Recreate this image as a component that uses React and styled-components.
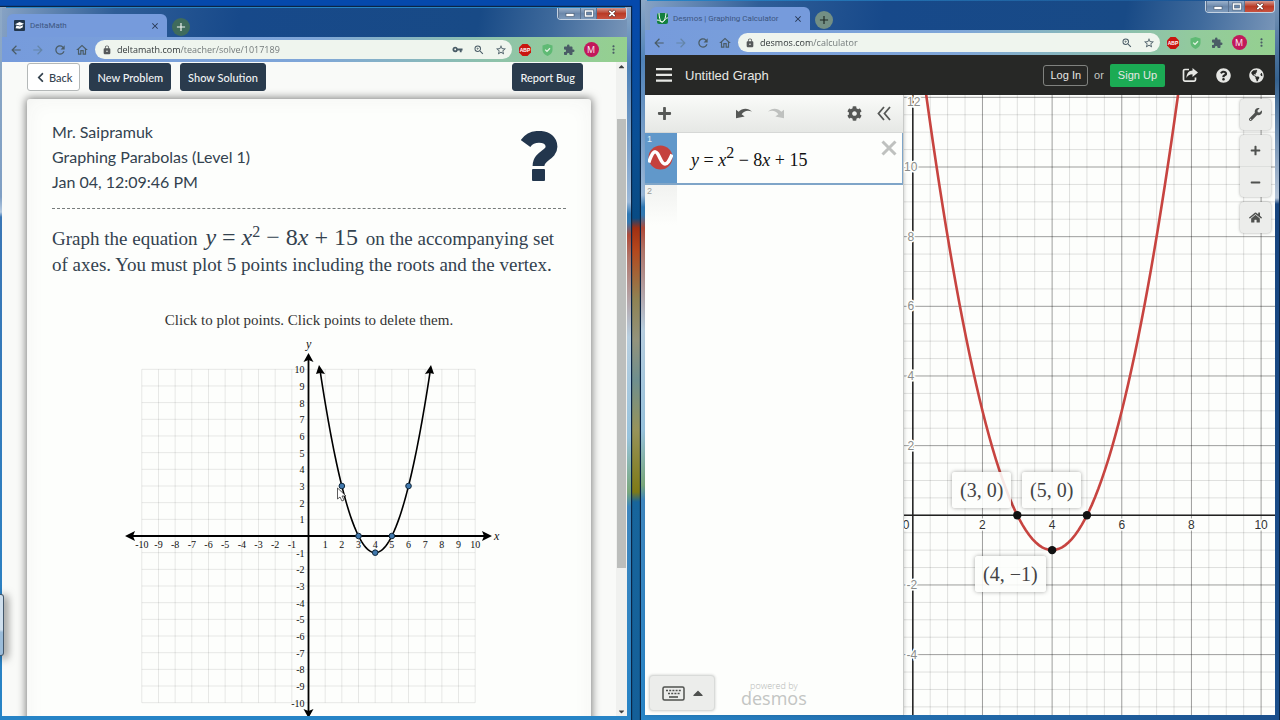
import styled, { createGlobalStyle } from "styled-components";
import {
  MdArrowBack,
  MdArrowForward,
  MdRefresh,
  MdOutlineHome,
  MdLock,
  MdVpnKey,
  MdZoomIn,
  MdStarBorder,
  MdExtension,
  MdMoreVert,
  MdClose,
  MdAdd,
} from "react-icons/md";
import {
  FaChevronLeft,
  FaQuestionCircle,
  FaGlobeAmericas,
  FaWrench,
  FaHome,
  FaCog,
  FaPlus,
  FaMinus,
  FaCaretUp,
  FaCaretDown,
} from "react-icons/fa";

const SANS = `"Liberation Sans", Arial, sans-serif`;
const UI = `"Open Sans", "Noto Sans", sans-serif`;
const SERIF = `"Liberation Serif", Georgia, serif`;

const GlobalStyle = createGlobalStyle`
  * {
    box-sizing: border-box;
  }
  body {
    margin: 0;
    overflow: hidden;
    font-family: ${SANS};
  }
  button {
    margin: 0;
    padding: 0;
    border: none;
    background: none;
    color: inherit;
    font: inherit;
    display: flex;
    align-items: center;
    justify-content: center;
  }
  h1, p {
    margin: 0;
    font-weight: 400;
  }
`;

/* ---------- desktop and window frame ---------- */

const Desktop = styled.main`
  position: relative;
  display: grid;
  grid-template-columns: 631fr 638fr;
  gap: 10px;
  height: 100vh;
  padding-right: 1px;
  background: linear-gradient(
    180deg,
    #0549ac 0,
    #0549ac 10px,
    #0a4f94 140px,
    #084b84 218px,
    #a12f12 228px,
    #b4471c 250px,
    #8f8354 300px,
    #93937c 340px,
    #6f8f8e 380px,
    #97935a 430px,
    #7f7a16 492px,
    #17659c 502px,
    #145f98 720px
  );
`;

/* glass edges: what shows through depends on the wallpaper behind each side */
const EDGE_PLAIN = "linear-gradient(#8ea9c6, #7f9fc4 190px, #b5cbe2 205px, #3a76b5 210px, #2784c6)";
const EDGE_DARK = "linear-gradient(#7895b8, #35628f 80px, #8da6c2 160px, #b3c3d6 198px, #17457f 204px, #1b4f8c)";
const EDGE_WALLPAPER = `linear-gradient(
  #8ea9c6 0, #4f82b8 60px, #9bb8d8 195px, #2f78b4 207px, #3379b2 215px, #b04a38 228px,
  #b07468 250px, #b8cfe0 330px, #98c3dd 430px, #79a77b 485px, #3e86be 500px, #2784c6 100%)`;

const Window = styled.section`
  display: flex;
  flex-direction: column;
  min-width: 0;
  min-height: 0;
  margin-top: ${(props) => props.$top}px;
  padding: 1px 4px ${(props) => props.$bottom}px ${(props) => props.$left}px;
  background:
    ${(props) => props.$edges[0]} left / 6px 100% no-repeat,
    ${(props) => props.$edges[1]} right / 6px 100% no-repeat,
    linear-gradient(90deg, #2784c6, ${(props) => props.$base});
  box-shadow: 0 0 1px 1px #0b2545;
`;

const TitleBar = styled.header`
  display: flex;
  align-items: flex-start;
  flex: none;
  height: 29px;
  padding-left: 5px;
  background: linear-gradient(
    100deg,
    #86a2c4 0,
    #2f5e98 18%,
    #17498a 38%,
    #184a86 76%,
    #3f6a9c 88%,
    #7895b8 100%
  );
`;

const Tab = styled.div`
  display: flex;
  align-items: center;
  gap: 5px;
  width: 160px;
  height: 23px;
  margin-top: 6px;
  padding: 0 7px;
  border-radius: 6px 6px 0 0;
  background: #769bdc;
  color: #3d5680;
  font: 8px Roboto, sans-serif;

  & span {
    flex: 1;
    white-space: nowrap;
  }
`;

const TabClose = styled.button`
  color: #24344f;
  font-size: 10px;
`;

const NewTab = styled.button`
  width: 18px;
  height: 18px;
  margin: 10px 0 0 5px;
  border-radius: 50%;
  background: ${(props) => props.$color};
  color: ${(props) => props.$ink};
  font-size: 14px;
`;

const WindowButtons = styled.div`
  display: flex;
  height: 12px;
  margin-left: auto;
  border: 1px solid #c4d2e2;
  border-top: none;
  border-radius: 0 0 4px 4px;
  overflow: hidden;
`;

const WindowButton = styled.button`
  width: ${(props) => props.$width}px;
  border-left: 1px solid #5b7290;
  background: ${(props) =>
    props.$close
      ? "linear-gradient(#d59a90, #b93a25 50%, #c85240)"
      : "linear-gradient(#9cb2cc, #6b88ab 50%, #7d9abb)"};
`;

const Toolbar = styled.nav`
  display: flex;
  align-items: center;
  flex: none;
  height: 25px;
  padding: 0 3px;
  background: linear-gradient(90deg, #769bdc 0, #7fa6d8 50%, #93cb9c 88%, #95d08f 100%);
`;

const ToolButton = styled.button`
  width: 22px;
  height: 22px;
  font-size: ${(props) => props.$size || 14}px;
  color: ${(props) => props.$color || "#4a5c66"};
`;

const Omnibox = styled.label`
  display: flex;
  align-items: center;
  flex: 1;
  min-width: 0;
  height: 19px;
  margin: 0 2px;
  padding: 0 0 0 7px;
  border-radius: 10px;
  background: #eff5ee;
  color: #55595a;
  font-size: 10px;
`;

const Address = styled.input`
  flex: 1;
  min-width: 0;
  margin-left: 5px;
  padding: 0;
  border: none;
  outline: none;
  font: 9px ${UI};
  color: transparent;
  background: linear-gradient(
    90deg,
    #2b3133 ${(props) => props.$host}px,
    #6c7374 ${(props) => props.$host}px
  );
  background-clip: text;
  -webkit-background-clip: text;
`;

const Avatar = styled.span`
  display: grid;
  place-items: center;
  width: 15px;
  height: 15px;
  border-radius: 50%;
  background: #c2185b;
  color: #fbe9f0;
  font: 9px ${UI};
`;

function MinimizeIcon() {
  return (
    <svg width="10" height="9" viewBox="0 0 10 9">
      <rect x="1" y="4.500" width="8" height="3" fill="#fff" stroke="#41546b" strokeWidth=".6" />
    </svg>
  );
}

function MaximizeIcon() {
  return (
    <svg width="10" height="9" viewBox="0 0 10 9">
      <rect x="1.500" y="2" width="7" height="5" fill="none" stroke="#41546b" strokeWidth="2.600" />
      <rect x="1.500" y="2" width="7" height="5" fill="none" stroke="#fff" strokeWidth="1.500" />
    </svg>
  );
}

function CloseIcon() {
  return (
    <svg width="10" height="9" viewBox="0 0 10 9">
      <path d="M2 1.500 8 7.500M8 1.500 2 7.500" stroke="#5c2a24" strokeWidth="3" />
      <path d="M2.300 1.800 7.700 7.200M7.700 1.800 2.300 7.200" stroke="#fff" strokeWidth="1.800" />
    </svg>
  );
}

function AbpIcon() {
  return (
    <svg width="12" height="12" viewBox="0 0 12 12">
      <path d="M3.500 0h5L12 3.500v5L8.500 12h-5L0 8.500v-5z" fill="#c9150f" />
      <text
        x="6"
        y="8"
        textAnchor="middle"
        fontFamily="Liberation Sans"
        fontWeight="700"
        fontSize="5"
        fill="#fff"
      >
        ABP
      </text>
    </svg>
  );
}

function ShieldIcon() {
  return (
    <svg width="11" height="12" viewBox="0 0 11 12">
      <path d="M5.500 0 10.500 1.500v4.500c0 3-2.500 5-5 6-2.500-1-5-3-5-6V1.500z" fill="#5fba74" />
      <path d="m3.200 5.600 1.800 1.800 3-3.200" fill="none" stroke="#e4f6e4" strokeWidth="1.300" />
    </svg>
  );
}

function DeltaFavicon() {
  return (
    <svg width="11" height="11" viewBox="0 0 11 11">
      <rect width="11" height="11" rx="1" fill="#22364d" />
      <path d="M5.500 2 10 3.800 6 5.700 1 4.300z" fill="#fff" />
      <path d="M2.500 5.500 6 6.600 8.800 5.300v2L6 8.700 1.500 8.300z" fill="#fff" />
    </svg>
  );
}

function DesmosFavicon() {
  return (
    <svg width="11" height="11" viewBox="0 0 11 11">
      <rect width="11" height="11" rx="2" fill="#12803f" />
      <path d="M2 0c.5 12 6 12 7 0M0 7c3 0 3 2 5 2s4-5 6-4" fill="none" stroke="#fff" strokeWidth="1" />
    </svg>
  );
}

function BrowserWindow({ frame, title, favicon, url, host, saved, plus, children }) {
  return (
    <Window
      $top={frame.top}
      $left={frame.left}
      $bottom={frame.bottom}
      $edges={frame.edges}
      $base={frame.base}
    >
      <TitleBar>
        <Tab>
          {favicon}
          <span>{title}</span>
          <TabClose aria-label="Close tab">
            <MdClose />
          </TabClose>
        </Tab>
        <NewTab aria-label="New tab" $color={plus.color} $ink={plus.ink}>
          <MdAdd />
        </NewTab>
        <WindowButtons>
          <WindowButton aria-label="Minimize" $width={22}>
            <MinimizeIcon />
          </WindowButton>
          <WindowButton aria-label="Maximize" $width={16}>
            <MaximizeIcon />
          </WindowButton>
          <WindowButton aria-label="Close" $width={30} $close>
            <CloseIcon />
          </WindowButton>
        </WindowButtons>
      </TitleBar>
      <Toolbar>
        <ToolButton aria-label="Back"><MdArrowBack /></ToolButton>
        <ToolButton aria-label="Forward" $color="#6485a8"><MdArrowForward /></ToolButton>
        <ToolButton aria-label="Reload"><MdRefresh /></ToolButton>
        <ToolButton aria-label="Home"><MdOutlineHome /></ToolButton>
        <Omnibox>
          <MdLock />
          <Address aria-label="Address" defaultValue={url} $host={host} />
          {saved && <ToolButton aria-label="Passwords" $size={11}><MdVpnKey /></ToolButton>}
          <ToolButton aria-label="Zoom" $size={12}><MdZoomIn /></ToolButton>
          <ToolButton aria-label="Bookmark" $size={12}><MdStarBorder /></ToolButton>
        </Omnibox>
        <ToolButton aria-label="Adblock Plus"><AbpIcon /></ToolButton>
        <ToolButton aria-label="Protection"><ShieldIcon /></ToolButton>
        <ToolButton aria-label="Extensions" $size={12}><MdExtension /></ToolButton>
        <ToolButton aria-label="Profile"><Avatar>M</Avatar></ToolButton>
        <ToolButton aria-label="Menu" $size={13}><MdMoreVert /></ToolButton>
      </Toolbar>
      {children}
    </Window>
  );
}

/* ---------- DeltaMath page ---------- */

const Viewport = styled.div`
  display: flex;
  flex: 1;
  min-height: 0;
  background: #f9faf8;
`;

const Page = styled.div`
  flex: 1;
  min-width: 0;
  overflow: hidden;
  padding: 1px 25px 0;
`;

const Actions = styled.div`
  display: flex;
  gap: 9px;
  padding-right: 8px;
`;

const ActionButton = styled.button`
  height: 28px;
  padding: 0 7px;
  gap: 3px;
  border: 1px solid ${(props) => (props.$plain ? "#b4b8b8" : "#2a3b4d")};
  border-radius: 3px;
  background: ${(props) => (props.$plain ? "#fff" : "#2a3b4d")};
  color: ${(props) => (props.$plain ? "#35434f" : "#f1f4f5")};
  font: 500 11px Lato, sans-serif;
  white-space: nowrap;

  &:last-child {
    margin-left: auto;
  }
`;

const Card = styled.article`
  height: 700px;
  margin-top: 8px;
  padding: 20px 25px 0;
  border-radius: 3px;
  background: #fdfefc;
  box-shadow: 0 0 9px 1px rgba(0, 0, 0, 0.5), inset 0 0 20px rgba(60, 60, 50, 0.05);
  color: #33424f;
`;

const CardHeader = styled.header`
  display: flex;
  justify-content: space-between;
  padding-bottom: 14px;
  border-bottom: 1px dashed #777c7c;
  font: 300 16px/25px Lato, sans-serif;

  & > svg {
    margin: 12px 8px 0 0;
  }
`;

const Question = styled.p`
  margin-top: 17px;
  font: 19px/26px ${SERIF};
`;

const MathText = styled.span`
  margin: 0 ${(props) => props.$gap || 0}px;
  font-family: ${SERIF};
  font-size: ${(props) => props.$size}px;
  line-height: 20px;
  white-space: nowrap;

  & sup {
    font-size: ${(props) => props.$sup}px;
    line-height: 0;
    vertical-align: 8px;
  }
`;

const Hint = styled.p`
  margin: 32px 0 5px;
  text-align: center;
  color: #333;
  font: 15px/20px ${SERIF};
`;

const Plot = styled.svg`
  display: block;
  margin: 0 auto;
  font: 10px ${SERIF};
`;

const Scrollbar = styled.div`
  display: grid;
  grid-template-rows: 57px 449fr 148fr;
  justify-items: center;
  width: 11px;
  background: #f0f1ef;
  color: #3c3f40;
  font-size: 9px;

  & svg:last-child {
    align-self: end;
  }
`;

const Thumb = styled.div`
  width: 9px;
  background: #bcbebc;
`;

const parabola = (x) => x * x - 8 * x + 15;

function curvePoints(from, to, origin, unit) {
  const points = [];
  for (let i = 0; i <= 80; i++) {
    const x = from + ((to - from) * i) / 80;
    points.push(`${(origin.x + x * unit).toFixed(2)},${(origin.y - parabola(x) * unit).toFixed(2)}`);
  }
  return points.join(" ");
}

const TICKS = Array.from({ length: 21 }, (_, i) => i - 10);
const PLOTTED = [2, 3, 4, 5, 6];

function DeltaGraph() {
  const u = 16.67;
  const o = { x: 199.5, y: 201 };
  const px = (x) => o.x + x * u;
  const py = (y) => o.y - y * u;
  return (
    <Plot width="400" height="400" viewBox="0 0 400 400">
      <g stroke="#000" strokeOpacity=".09">
        {TICKS.map((t) => (
          <g key={t}>
            <line x1={px(t)} x2={px(t)} y1={py(10)} y2={py(-10)} />
            <line x1={px(-10)} x2={px(10)} y1={py(t)} y2={py(t)} />
          </g>
        ))}
      </g>
      <g stroke="#000" strokeWidth="1.800">
        <line x1="20" x2="378" y1={o.y} y2={o.y} />
        <line x1={o.x} x2={o.x} y1="24" y2="376" />
      </g>
      <path d="M16 201l10-5-2 5 2 5zM383 201l-10-5 2 5-2 5z" />
      <path d="M199.500 18l-5 9 5-2 5 2zM199.500 383l-5-9 5 2 5-2z" />
      <g fill="#111">
        {TICKS.filter((t) => t !== 0).map((t) => (
          <g key={t}>
            <text x={px(t)} y={o.y + 12} textAnchor="middle">{t}</text>
            <text x={o.x - 4} y={py(t) + 4} textAnchor="end">{t}</text>
          </g>
        ))}
      </g>
      <g fontSize="12" fontStyle="italic" fill="#111">
        <text x="197" y="13">y</text>
        <text x="385" y="205">x</text>
      </g>
      <polyline
        points={curvePoints(0.7, 7.3, o, u)}
        fill="none"
        stroke="#000"
        strokeWidth="1.600"
      />
      <path d="M210 30l-3 9 4-1 5 1zM322 30l3 9-4-1-5 1z" />
      {PLOTTED.map((x) => (
        <circle key={x} cx={px(x)} cy={py(parabola(x))} r="2.800" fill="#4078ad" stroke="#10283c" />
      ))}
      <path
        d="M228.500 153v11l2.500-2 2 4 2-1-2-4h4z"
        fill="#fff"
        stroke="#333"
        strokeWidth=".8"
      />
    </Plot>
  );
}

function Equation({ size, sup, gap }) {
  return (
    <MathText $size={size} $sup={sup} $gap={gap}>
      <i>y</i> = <i>x</i>
      <sup>2</sup> − 8<i>x</i> + 15
    </MathText>
  );
}

function DeltaMath() {
  return (
    <Viewport>
      <Page>
        <Actions>
          <ActionButton $plain>
            <FaChevronLeft /> Back
          </ActionButton>
          <ActionButton>New Problem</ActionButton>
          <ActionButton>Show Solution</ActionButton>
          <ActionButton>Report Bug</ActionButton>
        </Actions>
        <Card>
          <CardHeader>
            <div>
              <p>Mr. Saipramuk</p>
              <p>Graphing Parabolas (Level 1)</p>
              <p>Jan 04, 12:09:46 PM</p>
            </div>
            <svg width="37" height="51" viewBox="0 0 37 51">
              <path
                d="M4.500 12.500C8 7.500 12.500 5.800 18 5.800c8 0 12.500 4 12.500 10 0 8.500-13 8.700-13 19.200"
                fill="none"
                stroke="#22364d"
                strokeWidth="11.800"
              />
              <rect x="11" y="38" width="13" height="12" rx="1" fill="#22364d" />
            </svg>
          </CardHeader>
          <Question>
            Graph the equation <Equation size={24} sup={16} gap={3} /> on the accompanying set of
            axes. You must plot 5 points including the roots and the vertex.
          </Question>
          <Hint>Click to plot points. Click points to delete them.</Hint>
          <DeltaGraph />
        </Card>
      </Page>
      <Scrollbar>
        <FaCaretUp />
        <Thumb />
        <FaCaretDown />
      </Scrollbar>
    </Viewport>
  );
}

/* ---------- Desmos page ---------- */

const DesmosHeader = styled.header`
  display: flex;
  align-items: center;
  flex: none;
  height: 40px;
  padding: 0 11px;
  background: #272826;
  color: #e6e7e4;
  font-size: 11px;

  & h1 {
    margin: 0 auto 0 13px;
    font-size: 13px;
  }
`;

const HeaderIcon = styled.button`
  width: 16px;
  margin-left: ${(props) => props.$gap || 0}px;
  font-size: 15px;
`;

const LogIn = styled.button`
  height: 21px;
  padding: 0 6px;
  border: 1px solid #80827f;
  border-radius: 3px;
`;

const Or = styled.span`
  margin: 0 6px;
  color: #c5c7c4;
`;

const SignUp = styled.button`
  height: 23px;
  padding: 0 8px;
  border-radius: 2px;
  background: #1bab54;
`;

const Calculator = styled.div`
  display: grid;
  grid-template-columns: 259fr 371fr;
  flex: 1;
  min-height: 0;
  background: #fdfefc;
`;

const Panel = styled.div`
  display: flex;
  flex-direction: column;
  min-width: 0;
  border-right: 1px solid #c9cbc9;
  box-shadow: 1px 0 3px rgba(0, 0, 0, 0.15);
`;

const PanelBar = styled.div`
  display: flex;
  align-items: center;
  flex: none;
  height: 38px;
  padding: 0 11px;
  background: linear-gradient(#fafbf9, #e6e8e5);
  border-bottom: 1px solid #d6d8d6;
  font-size: 15px;
`;

const BarButton = styled.button`
  width: 16px;
  margin-left: ${(props) => (props.$push ? "auto" : `${props.$gap || 0}px`)};
  color: ${(props) => (props.$faded ? "#bfc1bf" : "#565856")};
`;

const Expression = styled.div`
  display: flex;
  height: 52px;
  border: solid #7fa5c8;
  border-width: 0 1px 2px 0;
`;

const ExpressionTab = styled.div`
  width: 32px;
  padding: 1px 2px;
  background: ${(props) => (props.$active ? "#6198ca" : "linear-gradient(#f1f2f0, #fdfefc)")};
  color: ${(props) => (props.$active ? "#e3edf6" : "#9b9d9b")};
  font-size: 9px;

  & svg {
    display: block;
    margin: 1px 0 0 1px;
  }
`;

const Formula = styled.div`
  flex: 1;
  padding: 17px 0 0 14px;
  color: #111;
  line-height: 20px;
`;

const DeleteButton = styled.button`
  align-self: flex-start;
  margin: 7px 5px 0 0;
`;

const NextExpression = styled.div`
  display: flex;
  height: 40px;
`;

const PanelFooter = styled.footer`
  display: flex;
  align-items: center;
  gap: 26px;
  margin-top: auto;
  padding: 0 0 4px 4px;
`;

const KeypadButton = styled.button`
  width: 66px;
  height: 36px;
  gap: 5px;
  padding-left: 3px;
  border: 1px solid #d9dbd9;
  border-radius: 4px;
  background: #ecedeb;
  box-shadow: 0 0 3px rgba(0, 0, 0, 0.2);
  color: #4f514f;
  font-size: 16px;
`;

const PoweredBy = styled.p`
  color: #b4b6b4;
  text-align: center;
  font: 300 9px/10px ${UI};

  & b {
    display: block;
    color: #c3c5c3;
    font: 400 18px/14px ${UI};
  }
`;

const GraphPaper = styled.div`
  position: relative;
  min-width: 0;
  overflow: hidden;

  & > svg {
    display: block;
    width: 100%;
    height: 100%;
    font: 12px ${SANS};
  }
`;

const PointLabel = styled.output`
  position: absolute;
  left: ${(props) => props.$x}px;
  top: ${(props) => props.$y}px;
  padding: 0 8px;
  border-radius: 3px;
  background: rgba(253, 254, 252, 0.88);
  box-shadow: 0 0 4px rgba(0, 0, 0, 0.35);
  color: #444;
  font: 20px/36px ${SERIF};
`;

const GraphControls = styled.div`
  position: absolute;
  top: 4px;
  right: 4px;
  display: flex;
  flex-direction: column;
  gap: 5px;
`;

const ControlGroup = styled.div`
  border-radius: 4px;
  background: #ecedeb;
  box-shadow: 0 0 3px rgba(0, 0, 0, 0.35);
`;

const ControlButton = styled.button`
  width: 31px;
  height: 31px;
  color: #4f514f;
  font-size: ${(props) => props.$size || 13}px;

  & + & {
    border-top: 1px solid #dddfdd;
  }
`;

const GRAPH = { x: 8.8, y: 420.3 };
const GRAPH_UNIT = 34.83;
const gx = (x) => GRAPH.x + x * GRAPH_UNIT;
const gy = (y) => GRAPH.y - y * GRAPH_UNIT;

function DesmosGraph() {
  const halves = Array.from({ length: 80 }, (_, i) => (i - 16) / 2);
  return (
    <svg>
      {halves.map((t) => (
        <g key={t} stroke="#000" strokeOpacity={t % 2 === 0 ? 0.38 : 0.12}>
          <line x1={gx(t)} x2={gx(t)} y1="0" y2="100%" />
          <line x1="0" x2="100%" y1={gy(t - 10)} y2={gy(t - 10)} />
        </g>
      ))}
      <line x1={gx(0)} x2={gx(0)} y1="0" y2="100%" stroke="#222" strokeWidth="1.500" />
      <line x1="0" x2="100%" y1={gy(0)} y2={gy(0)} stroke="#222" strokeWidth="1.500" />
      <g textAnchor="middle" stroke="#fdfefc" strokeWidth="3" paintOrder="stroke">
        <g fill="#333">
          <text x="2" y={gy(0) + 14}>0</text>
          {[2, 4, 6, 8, 10].map((t) => (
            <text key={t} x={gx(t)} y={gy(0) + 14}>{t}</text>
          ))}
        </g>
        <g fill="#8b8d8b">
          <text x={gx(0) + 1} y="11">12</text>
          {[10, 8, 6, 4, 2, -2, -4].map((t) => (
            <text key={t} x={gx(0) - (t < 0 ? 1 : 2)} y={gy(t) + 4}>{t}</text>
          ))}
        </g>
      </g>
      <polyline
        points={curvePoints(0.2, 7.8, GRAPH, GRAPH_UNIT)}
        fill="none"
        stroke="#c74440"
        strokeWidth="2.600"
      />
      {[3, 4, 5].map((x) => (
        <circle key={x} cx={gx(x)} cy={gy(parabola(x))} r="4.200" fill="#111" />
      ))}
    </svg>
  );
}

function Desmos() {
  return (
    <>
      <DesmosHeader>
        <HeaderIcon aria-label="Open menu">
          <svg width="16" height="14" viewBox="0 0 16 14" fill="#e6e7e4">
            <path d="M0 0h16v2.200H0zM0 5.800h16V8H0zM0 11.500h16v2.200H0z" />
          </svg>
        </HeaderIcon>
        <h1>Untitled Graph</h1>
        <LogIn>Log In</LogIn>
        <Or>or</Or>
        <SignUp>Sign Up</SignUp>
        <HeaderIcon aria-label="Share" $gap={17}>
          <svg width="16" height="16" viewBox="0 0 16 16">
            <path
              d="M7 2.500H2.800A1.300 1.300 0 0 0 1.500 3.800v9A1.300 1.300 0 0 0 2.800 14.100h9.400a1.300 1.300 0 0 0 1.300-1.300V10.500"
              fill="none"
              stroke="#e6e7e4"
              strokeWidth="1.700"
            />
            <path d="M10.500 1 16 5.500 10.500 10V7.200C7.500 7.200 5.800 8.300 4.500 11c0-4.500 2.200-7.200 6-7.400z" fill="#e6e7e4" />
          </svg>
        </HeaderIcon>
        <HeaderIcon aria-label="Help" $gap={17}><FaQuestionCircle /></HeaderIcon>
        <HeaderIcon aria-label="Language" $gap={17}><FaGlobeAmericas /></HeaderIcon>
      </DesmosHeader>
      <Calculator>
        <Panel>
          <PanelBar>
            <BarButton aria-label="Add item"><FaPlus /></BarButton>
            <BarButton aria-label="Undo" $gap={64}>
              <svg width="17" height="11" viewBox="0 0 17 11" fill="currentColor">
                <path d="M0 1.500 2.800 3.700C6.500-.5 13-.8 17 3.500 12.500 1.500 8.500 2.500 6 6.300L9.200 8.800 0 10.500z" />
              </svg>
            </BarButton>
            <BarButton aria-label="Redo" $gap={16} $faded>
              <svg width="17" height="11" viewBox="0 0 17 11" fill="currentColor">
                <path d="M17 1.500 14.200 3.700C10.500-.5 4-.8 0 3.500 4.500 1.500 8.500 2.500 11 6.300L7.800 8.800 17 10.500z" />
              </svg>
            </BarButton>
            <BarButton aria-label="Edit list" $push><FaCog /></BarButton>
            <BarButton aria-label="Hide list" $gap={14}>
              <svg width="14" height="15" viewBox="0 0 14 15">
                <path d="M7 1 1.500 7.500 7 14M13 1 7.500 7.500 13 14" fill="none" stroke="#565856" strokeWidth="1.800" />
              </svg>
            </BarButton>
          </PanelBar>
          <Expression>
            <ExpressionTab $active>
              1
              <svg width="25" height="25" viewBox="0 0 25 25">
                <circle cx="12.500" cy="12.500" r="12" fill="#c5413d" />
                <path
                  d="M.8 17.500C4 8 6.500 4.500 9.500 8.500c2.500 3.500 4 10.500 7.500 10.500 3 0 4.500-4 7-9.500"
                  fill="none"
                  stroke="#fff"
                  strokeWidth="3.500"
                />
              </svg>
            </ExpressionTab>
            <Formula role="textbox" aria-label="Expression 1">
              <Equation size={18} sup={16} />
            </Formula>
            <DeleteButton aria-label="Delete expression">
              <svg width="16" height="16" viewBox="0 0 16 16">
                <path d="M1.500 1.500l13 13M14.500 1.500l-13 13" stroke="#bfc1bf" strokeWidth="3" />
              </svg>
            </DeleteButton>
          </Expression>
          <NextExpression>
            <ExpressionTab>2</ExpressionTab>
          </NextExpression>
          <PanelFooter>
            <KeypadButton aria-label="Open keypad">
              <svg width="23" height="15" viewBox="0 0 23 15">
                <rect x="1" y="1" width="21" height="13" rx="1.500" fill="none" stroke="#4f514f" strokeWidth="1.500" />
                <path d="M4 4.500h15M6 7.500h12" stroke="#4f514f" strokeWidth="1.700" strokeDasharray="2 1.200" />
                <path d="M7 11h9" stroke="#4f514f" strokeWidth="1.600" />
              </svg>
              <FaCaretUp />
            </KeypadButton>
            <PoweredBy>
              powered by<b>desmos</b>
            </PoweredBy>
          </PanelFooter>
        </Panel>
        <GraphPaper>
          <DesmosGraph />
          <PointLabel $x={48} $y={377}>(3, 0)</PointLabel>
          <PointLabel $x={118} $y={377}>(5, 0)</PointLabel>
          <PointLabel $x={71} $y={461}>(4, −1)</PointLabel>
          <GraphControls>
            <ControlGroup>
              <ControlButton aria-label="Graph settings"><FaWrench /></ControlButton>
            </ControlGroup>
            <ControlGroup>
              <ControlButton aria-label="Zoom in" $size={11}><FaPlus /></ControlButton>
              <ControlButton aria-label="Zoom out" $size={11}><FaMinus /></ControlButton>
            </ControlGroup>
            <ControlGroup>
              <ControlButton aria-label="Default view"><FaHome /></ControlButton>
            </ControlGroup>
          </GraphControls>
        </GraphPaper>
      </Calculator>
    </>
  );
}

const EdgeHandle = styled.div`
  position: absolute;
  left: 0;
  top: 594px;
  width: 4px;
  height: 62px;
  border: solid #44586b;
  border-width: 1px 1px 1px 0;
  border-radius: 0 3px 3px 0;
  background: linear-gradient(#cfdfed 58%, #9bbcd9 62%);
  box-shadow: 2px 2px 8px 1px rgba(0, 0, 0, 0.55);
`;

const LEFT_FRAME = {
  top: 7,
  left: 2,
  bottom: 4,
  edges: [EDGE_PLAIN, EDGE_WALLPAPER],
  base: "#2784c6",
};

const RIGHT_FRAME = {
  top: 0,
  left: 4,
  bottom: 5,
  edges: [EDGE_WALLPAPER, EDGE_DARK],
  base: "#1b4f8c",
};

function App() {
  return (
    <>
      <GlobalStyle />
      <Desktop>
        <BrowserWindow
          frame={LEFT_FRAME}
          title="DeltaMath"
          favicon={<DeltaFavicon />}
          url="deltamath.com/teacher/solve/1017189"
          host={63}
          plus={{ color: "#3f6b5c", ink: "#f1f5f2" }}
          saved
        >
          <DeltaMath />
        </BrowserWindow>
        <BrowserWindow
          frame={RIGHT_FRAME}
          title="Desmos | Graphing Calculator"
          favicon={<DesmosFavicon />}
          url="desmos.com/calculator"
          host={50}
          plus={{ color: "#738f84", ink: "#1c2723" }}
        >
          <Desmos />
        </BrowserWindow>
        <EdgeHandle />
      </Desktop>
    </>
  );
}

export default App;
